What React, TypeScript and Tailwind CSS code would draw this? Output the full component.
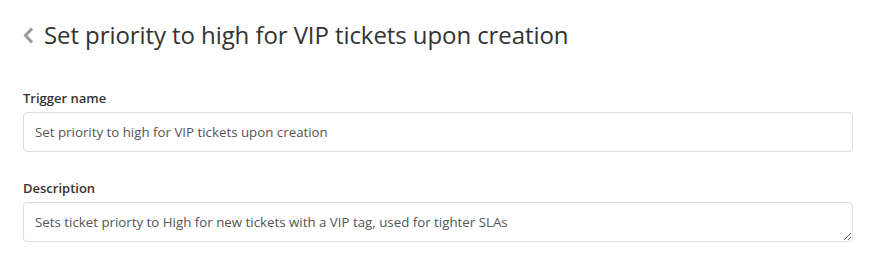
import React from 'react';

// Trigger edit header + basic fields

export default function App() {
  const font = { fontFamily: '"Open Sans", "Noto Sans", Arial, sans-serif' };

  return (
    <div className="min-h-screen bg-white px-[23px] pt-[19px] text-[#333]" style={font}>
      {/* Header */}
      <div className="flex items-center h-[32px]">
        <button type="button" className="w-[21px] h-[32px] flex items-center text-[#999]">
          <svg width="11" height="17" viewBox="0 0 11 17" fill="none">
            <polyline points="9,1.5 2.5,8.5 9,15.5" stroke="currentColor" strokeWidth="3" />
          </svg>
        </button>
        <h1 className="text-[24px] leading-[32px] text-[#333] font-normal tracking-[-0.08px]">
          Set priority to high for VIP tickets upon creation
        </h1>
      </div>

      {/* Trigger name */}
      <div className="mt-[38px]">
        <label className="block text-[13px] font-semibold leading-[18px] text-[#333]">Trigger name</label>
        <input
          type="text"
          defaultValue="Set priority to high for VIP tickets upon creation"
          className="mt-[5px] block w-[830px] h-[40px] px-[11px] border border-[#ddd] rounded-[4px] text-[13.3px] text-[#555] outline-none"
          style={font}
        />
      </div>

      {/* Description */}
      <div className="mt-[27px]">
        <label className="block text-[13px] font-semibold leading-[18px] text-[#333]">Description</label>
        <textarea
          defaultValue="Sets ticket priorty to High for new tickets with a VIP tag, used for tighter SLAs"
          className="mt-[5px] block w-[830px] h-[40px] px-[11px] py-[9px] border border-[#ddd] rounded-[4px] text-[13.3px] leading-[20px] text-[#555] outline-none resize-y"
          style={font}
        />
      </div>
    </div>
  );
}
